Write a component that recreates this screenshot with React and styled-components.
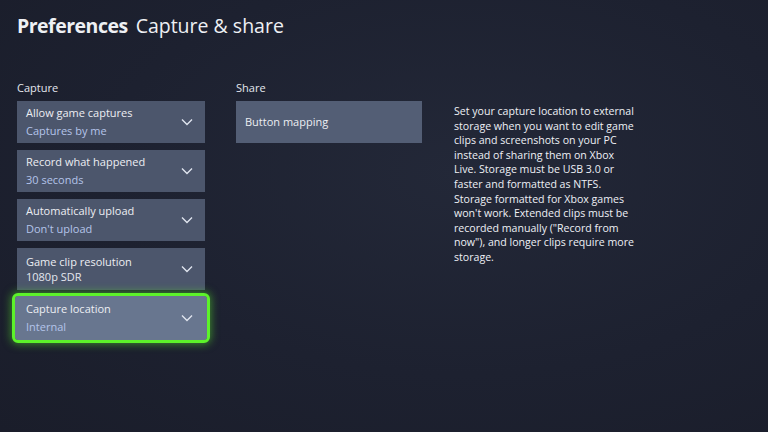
import React from 'react';
import styled, { createGlobalStyle, css } from 'styled-components';

const Global = createGlobalStyle`
  html, body {
    margin: 0;
    padding: 0;
    background: #1d2130;
  }
  body {
    font-family: "Open Sans", "Noto Sans", "DejaVu Sans", sans-serif;
    color: #e9ecf2;
  }
`;

const Screen = styled.div`
  width: 768px;
  height: 432px;
  box-sizing: border-box;
  padding: 12px 17px 0;
  background: radial-gradient(ellipse at 60% 40%, #232838 0%, #1d2130 55%, #1a1d2a 100%);
  overflow: hidden;
`;

const Header = styled.h1`
  margin: 0;
  font-size: 19.5px;
  line-height: 28px;
  font-weight: 400;
  color: #eef0f4;
  display: flex;
  gap: 8px;
`;

const Strong = styled.span`
  font-weight: 700;
  letter-spacing: -0.5px;
`;

const Body = styled.div`
  display: flex;
  margin-top: 40px;
`;

const Column = styled.section`
  display: flex;
  flex-direction: column;
  width: ${(p) => p.$width}px;
  margin-right: ${(p) => p.$gap || 0}px;
`;

const Label = styled.div`
  font-size: 11px;
  line-height: 16px;
  height: 16px;
  color: #e4e7ee;
  margin-bottom: 5px;
`;

const List = styled.div`
  display: flex;
  flex-direction: column;
  gap: 7px;
`;

const Card = styled.div`
  position: relative;
  height: 42px;
  box-sizing: border-box;
  display: flex;
  align-items: center;
  justify-content: space-between;
  padding: 0 12px 0 9px;
  background: #4c566c;
  ${(p) =>
    p.$focused &&
    css`
      margin: -1px -2px 0;
      height: 44px;
      padding: 0 14px 0 11px;
      background: #68768f;
      border-radius: 3px;
      outline: 3px solid #5cf22a;
      outline-offset: 0px;
      box-shadow: 0 0 8px 4px rgba(92, 242, 42, 0.5);
    `}
`;

const ShareButton = styled(Card)`
  background: #535e75;
  padding-left: 9px;
`;

const Texts = styled.div`
  display: flex;
  flex-direction: column;
  gap: ${(p) => (p.$tight ? 1 : 4)}px;
`;

const Title = styled.div`
  font-size: 11px;
  line-height: 14px;
  color: #eceef3;
`;

const Value = styled.div`
  font-size: 11px;
  line-height: 14px;
  color: #b4c4ea;
  ${(p) => p.$white && css`color: #e3e6ee;`}
`;

const Description = styled.p`
  margin: 24px 0 0 32px;
  width: 181px;
  font-size: 10.6px;
  line-height: 14.6px;
  color: #eef0f5;
`;

const Chevron = () => (
  <svg width="12" height="8" viewBox="0 0 12 8" fill="none">
    <path d="M1 1.5 L6 6.5 L11 1.5" stroke="#dfe4ee" strokeWidth="1.4" />
  </svg>
);

const captureItems = [
  { title: 'Allow game captures', value: 'Captures by me' },
  { title: 'Record what happened', value: '30 seconds' },
  { title: 'Automatically upload', value: "Don't upload" },
  { title: 'Game clip resolution', value: '1080p SDR', tight: true, white: true },
  { title: 'Capture location', value: 'Internal', focused: true },
];

export default function App() {
  return (
    <Screen>
      <Global />
      <Header>
        <Strong>Preferences</Strong>
        <span>Capture &amp; share</span>
      </Header>
      <Body>
        <Column $width={188} $gap={31}>
          <Label>Capture</Label>
          <List>
            {captureItems.map((item) => (
              <Card key={item.title} $focused={item.focused}>
                <Texts $tight={item.tight}>
                  <Title>{item.title}</Title>
                  <Value $white={item.white}>{item.value}</Value>
                </Texts>
                <Chevron />
              </Card>
            ))}
          </List>
        </Column>
        <Column $width={186}>
          <Label>Share</Label>
          <ShareButton>
            <Title>Button mapping</Title>
          </ShareButton>
        </Column>
        <Description>
          Set your capture location to external storage when you want to edit game
          clips and screenshots on your PC instead of sharing them on Xbox Live.
          Storage must be USB 3.0 or faster and formatted as NTFS. Storage formatted
          for Xbox games won't work. Extended clips must be recorded manually
          ("Record from now"), and longer clips require more storage.
        </Description>
      </Body>
    </Screen>
  );
}
